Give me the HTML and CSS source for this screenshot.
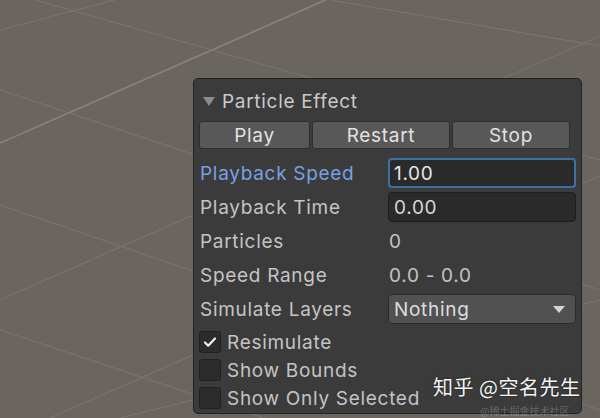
FILE: index.html
```html
<!DOCTYPE html>
<html lang="en">
<head>
  <title>Scene View - Particle Effect</title>
  <link rel="stylesheet" href="styles.css">
</head>
<body>
  <div class="scene">
    <!-- ground grid of the scene view -->
    <svg class="grid" width="600" height="418" viewBox="0 0 600 418">
      <g stroke="#7b7470" stroke-width="1.1" fill="none">
        <line x1="0" y1="143" x2="330" y2="-2" stroke="#8a837d" stroke-width="1.6"/>
        <line x1="0" y1="300" x2="600" y2="36"/>
        <line x1="0" y1="440" x2="600" y2="176"/>
        <line x1="120" y1="418" x2="600" y2="300"/>
        <line x1="0" y1="30" x2="190" y2="-20"/>
        <line x1="0" y1="90" x2="600" y2="290"/>
        <line x1="0" y1="205" x2="600" y2="410"/>
        <line x1="0" y1="330" x2="300" y2="430"/>
        <line x1="330" y1="0" x2="600" y2="46"/>
        <line x1="0" y1="-10" x2="600" y2="160"/>
      </g>
    </svg>

    <div class="panel">
      <div class="panel-head">
        <span class="fold"></span>
        <span class="panel-title">Particle Effect</span>
      </div>

      <div class="buttons">
        <button class="btn btn-play">Play</button>
        <button class="btn btn-restart">Restart</button>
        <button class="btn btn-stop">Stop</button>
      </div>

      <div class="fields">
        <div class="row">
          <span class="label label-active">Playback Speed</span>
          <span class="input input-focus">1.00</span>
        </div>
        <div class="row">
          <span class="label">Playback Time</span>
          <span class="input">0.00</span>
        </div>
        <div class="row">
          <span class="label">Particles</span>
          <span class="value">0</span>
        </div>
        <div class="row">
          <span class="label">Speed Range</span>
          <span class="value">0.0 - 0.0</span>
        </div>
        <div class="row">
          <span class="label">Simulate Layers</span>
          <span class="dropdown">Nothing<span class="caret"></span></span>
        </div>
      </div>

      <div class="checks">
        <label class="check">
          <span class="box box-on">
            <svg width="16" height="16" viewBox="0 0 16 16"><path d="M3 8.5l3.2 3.2L13 4.5" stroke="#f2f2f2" stroke-width="2.2" fill="none" stroke-linecap="round" stroke-linejoin="round"/></svg>
          </span>
          Resimulate
        </label>
        <label class="check"><span class="box"></span>Show Bounds</label>
        <label class="check"><span class="box"></span>Show Only Selected</label>
      </div>
    </div>

    <div class="mark">知乎 @空名先生</div>
    <div class="mark-ghost">@稀土掘金技术社区</div>
  </div>
</body>
</html>
```

FILE: styles.css
```css
body {
  margin: 0;
  font-family: Inter, "Noto Sans", sans-serif;
  background: #6b6560;
}
.scene {
  position: relative;
  width: 600px;
  height: 418px;
  overflow: hidden;
  padding: 78px 0 0 193px;
  box-sizing: border-box;
}
.grid {
  position: absolute;
  left: 0;
  top: 0;
}
.panel {
  position: relative;
  width: 389px;
  height: 336px;
  box-sizing: border-box;
  background: #3b3b3b;
  border: 1px solid #232323;
  border-radius: 5px;
  padding: 0 5px 0 5px;
  color: #c4c4c4;
  font-size: 19px;
  letter-spacing: 0.7px;
}
.panel-head {
  display: flex;
  align-items: center;
  height: 28px;
  margin-top: 8px;
  padding-left: 4px;
}
.fold {
  width: 0;
  height: 0;
  border-left: 6px solid transparent;
  border-right: 6px solid transparent;
  border-top: 9px solid #8c8c8c;
  margin-right: 7px;
}
.panel-title {
  color: #cacaca;
}
.buttons {
  display: flex;
  gap: 2px;
  margin-top: 6px;
  margin-right: 6px;
  height: 28px;
}
.btn {
  font: inherit;
  letter-spacing: inherit;
  color: #e2e2e2;
  background: #585858;
  border: 1px solid #2e2e2e;
  border-radius: 3px;
  padding: 0;
}
.btn-play { width: 111px; }
.btn-restart { width: 138px; }
.btn-stop { flex: 1; }
.fields {
  display: flex;
  flex-direction: column;
  gap: 4px;
  margin-top: 9px;
}
.row {
  display: flex;
  align-items: center;
  height: 30px;
}
.label {
  width: 189px;
  padding-left: 1px;
  box-sizing: border-box;
}
.label-active {
  color: #77a1e2;
}
.input, .dropdown, .value {
  flex: 1;
  height: 30px;
  box-sizing: border-box;
  display: flex;
  align-items: center;
  padding-left: 5px;
}
.input {
  background: #2a2a2a;
  border: 1px solid #1e1e1e;
  border-radius: 4px;
  color: #d6d6d6;
}
.input-focus {
  border: 2px solid #3f6fa6;
  padding-left: 4px;
  color: #e6e6e6;
}
.value {
  padding-left: 1px;
}
.dropdown {
  background: #515151;
  border: 1px solid #2b2b2b;
  border-radius: 4px;
  color: #dedede;
  justify-content: space-between;
  padding-right: 10px;
}
.caret {
  width: 0;
  height: 0;
  border-left: 6px solid transparent;
  border-right: 6px solid transparent;
  border-top: 7px solid #d4d4d4;
}
.checks {
  display: flex;
  flex-direction: column;
  margin-top: 4px;
}
.check {
  display: flex;
  align-items: center;
  height: 28px;
  gap: 6px;
}
.box {
  width: 22px;
  height: 22px;
  box-sizing: border-box;
  background: #2c2c2c;
  border: 1px solid #202020;
  border-radius: 3px;
  display: flex;
  align-items: center;
  justify-content: center;
}
.mark {
  position: absolute;
  left: 433px;
  top: 377px;
  line-height: 20px;
  font-family: "Noto Sans CJK SC", sans-serif;
  font-size: 20px;
  color: #f4f4f4;
  letter-spacing: 0.5px;
  text-shadow: 0 0 2px rgba(0, 0, 0, 0.5);
}
.mark-ghost {
  position: absolute;
  left: 480px;
  top: 406px;
  line-height: 10px;
  font-family: "Noto Sans CJK SC", sans-serif;
  font-size: 10px;
  color: rgba(200, 200, 200, 0.3);
  filter: blur(0.5px);
}
```
